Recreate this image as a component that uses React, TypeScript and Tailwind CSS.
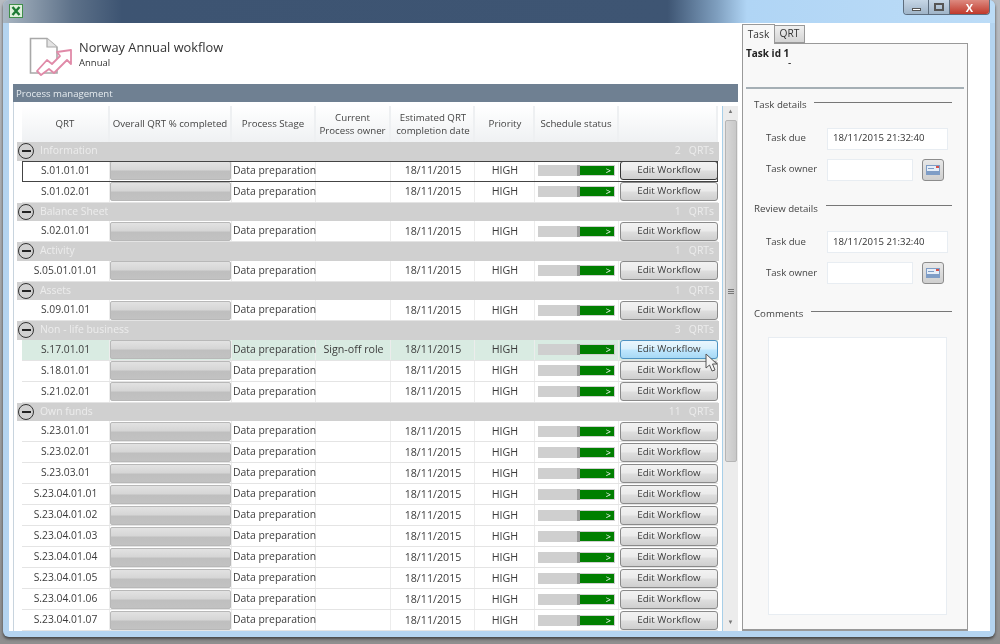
import React from "react";

const cols = "grid w-[696px] grid-cols-[88px_122px_84px_75px_84px_60px_84px_99px]";
const cell = "flex h-full items-center justify-center border-r border-[#ececec]";

function Progress() {
  return <div className="h-[19px] w-[121px] rounded-[2px] border border-[#b8b8b8] bg-[linear-gradient(180deg,#e2e2e2_0%,#d6d6d6_45%,#bfbfbf_55%,#c2c2c2_100%)]" />;
}

function Schedule() {
  return (
    <div className="ml-[3px] flex h-[11px] w-[77px] items-center bg-[#cfcfcf]">
      <div className="w-[39px]" />
      <div className="h-full w-[3px] bg-[#9c9c9c]" />
      <div className="mr-px flex h-[9px] flex-1 items-center justify-end bg-[#007f00] pr-[3px] text-[9px] leading-none text-white">&gt;</div>
    </div>
  );
}

function Row({ q, owner, hover, selected }: { q: string; owner?: string; hover?: boolean; selected?: boolean }) {
  return (
    <div className={`${cols} h-[21px] items-center border-b border-[#e4e4e4] text-center text-[10.7px] text-[#3c3c3c] ${hover ? "bg-[#d9ebe2]" : "bg-white"} ${selected ? "outline outline-1 -outline-offset-1 outline-[#444]" : ""}`}>
      <div className={`${cell} text-[10.3px]`}>{q}</div>
      <div className={cell}><Progress /></div>
      <div className={`${cell} justify-start whitespace-nowrap pl-[1px] text-[10.4px]`}>Data preparation</div>
      <div className={`${cell} pl-[1px]`}>{owner}</div>
      <div className={`${cell} pl-[1px]`}>18/11/2015</div>
      <div className={`${cell} pl-[1px]`}>HIGH</div>
      <div className={`${cell} justify-start`}><Schedule /></div>
      <button className={`ml-px h-[19px] w-[98px] rounded-[3px] border text-[9.8px] text-[#3c3c3c] ${selected ? "border-[#333]" : hover ? "border-[#4f93c2]" : "border-[#8a8a8a]"} ${hover ? "bg-[linear-gradient(180deg,#eaf6fd_0%,#d9f0fc_45%,#bee6fd_55%,#a7d9f5_100%)]" : "bg-[linear-gradient(180deg,#f2f2f2_0%,#ebebeb_45%,#dddddd_55%,#cfcfcf_100%)]"}`}>Edit Workflow</button>
    </div>
  );
}

function Group({ name, count }: { name: string; count: string }) {
  return (
    <div className="relative -ml-[5px] flex h-[18.5px] w-[702px] items-center justify-between bg-[#d0d0d0] pl-[23px] pr-[5px] text-[10.4px] text-[#ececec]">
      <span className="absolute left-[1px] top-[1px] flex h-[16px] w-[16px] items-center justify-center rounded-full border-[1.5px] border-[#333]">
        <span className="h-[2px] w-[9px] bg-[#222]" />
      </span>
      <span>{name}</span>
      <span className="whitespace-pre">{count}{"   "}QRTs</span>
    </div>
  );
}

function Head({ children, nudge }: { children?: React.ReactNode; nudge?: boolean }) {
  return <div className={`flex items-center justify-center border-r-2 border-[#eef0f2] text-center text-[9.7px] leading-[13.5px] text-[#444] ${nudge ? "pl-[2px]" : ""}`}>{children}</div>;
}

function Fieldset({ title, w }: { title: string; w: string }) {
  return (
    <div className="flex items-center pl-[11px] pr-[12px] text-[9.7px] text-[#444]">
      <span className={w}>{title}</span>
      <div className="-mt-[6px] h-px flex-1 bg-[#777]" />
    </div>
  );
}

function Details({ title }: { title: string }) {
  return (
    <div>
      <Fieldset title={title} w={title === "Task details" ? "w-[60px]" : "w-[72px]"} />
      <div className="mt-[15px] flex items-center pl-[23px] text-[9.6px] text-[#444]">
        <span className="w-[61px]">Task due</span>
        <div className="flex h-[22px] w-[121px] items-center border border-[#e8edf2] bg-white pl-[5px] text-[#333]">18/11/2015 21:32:40</div>
      </div>
      <div className="mt-[9px] flex items-center pl-[23px] text-[9.6px] text-[#444]">
        <span className="w-[61px]">Task owner</span>
        <div className="h-[22px] w-[86px] border border-[#e8edf2] bg-white" />
        <button className="ml-[9px] flex h-[22px] w-[22px] items-center justify-center rounded-[3px] border border-[#8c8c8c] bg-[linear-gradient(180deg,#e8e8e8,#cfcfcf)]">
          <svg width="14" height="10" viewBox="0 0 14 10">
            <rect x="0.5" y="0.5" width="13" height="9" fill="#e6eef8" stroke="#7f9dc6" />
            <rect x="1" y="6" width="12" height="3" fill="#7f9dc6" />
            <rect x="2" y="3" width="6" height="1" fill="#7f9dc6" />
            <rect x="10" y="1" width="3" height="2" fill="#d8504a" />
          </svg>
        </button>
      </div>
    </div>
  );
}

export default function App() {
  return (
    <div className="relative flex h-[644px] w-[1000px] flex-col overflow-hidden bg-[linear-gradient(180deg,#b8bcc2_0%,#8f8f8f_100%)] font-['Open_Sans','Noto_Sans',sans-serif] blur-[0.4px]">
      <div className="ml-[3px] flex h-[637px] w-[992px] flex-col rounded-[6px] bg-[#b4d4f0] shadow-[0_2px_3px_#444]">
        <div className="relative flex h-[23px] shrink-0 items-start rounded-t-[6px] bg-[linear-gradient(90deg,#a9b6c2_0%,#5d7189_7%,#3d5472_12%,#3e5573_67%,#7f9fbf_72%,#b0d5f5_75%,#bcdcf7_100%)] pl-[6px] pt-[4px]">
          <svg width="14" height="14" viewBox="0 0 14 14">
            <rect x="0.5" y="0.5" width="13" height="13" fill="#dff0dc" stroke="#3f8f4a" />
            <path d="M3.5 3 L10.5 11 M10.5 3 L3.5 11" stroke="#1d7a35" strokeWidth="2.4" />
          </svg>
          <div className="absolute right-[5px] top-0 flex h-[15px] overflow-hidden rounded-b-[4px] border border-t-0 border-[#5d6d7e]">
            <div className="flex w-[24px] items-end justify-center bg-[linear-gradient(180deg,#c6d6e6,#9fb4c8)] pb-[3px]">
              <div className="h-[3px] w-[9px] border border-[#555] bg-white" />
            </div>
            <div className="flex w-[22px] items-center justify-center border-x border-[#5d6d7e] bg-[linear-gradient(180deg,#c6d6e6,#9fb4c8)]">
              <div className="h-[8px] w-[10px] border-2 border-[#555]" />
            </div>
            <div className="flex w-[39px] items-center justify-center bg-[linear-gradient(180deg,#dd8a80,#c0392b)] text-[11px] font-bold leading-none text-white">X</div>
          </div>
        </div>
        <div className="ml-[6px] mr-[5px] flex h-[608px] bg-white">
          <div className="flex w-[729px] shrink-0 flex-col pl-[4px]">
            <div className="flex h-[61px] shrink-0 items-start pl-[16px]">
              <svg width="44" height="40" viewBox="0 0 44 40" className="mt-[14px]">
                <path d="M1.5 1.5 H18 L28 10 V36 H1.5 Z" fill="#fff" stroke="#a8a8a8" strokeWidth="1.6" />
                <path d="M18 1.5 V10 H28" fill="#e4e4e4" stroke="#a8a8a8" strokeWidth="1.2" />
                <path d="M8 34 L18 23 L23 27 L31 19 L28 15 L42 13 V27 L38 23 L25 36 L20 32 L12 38 Z" fill="#fff" stroke="#e08aa8" strokeWidth="1.8" strokeLinejoin="round" />
              </svg>
              <div className="ml-[6px] mt-[16px]">
                <div className="text-[12.8px] leading-[17px] text-[#333]">Norway Annual wokflow</div>
                <div className="text-[9.5px] leading-[13px] text-[#333]">Annual</div>
              </div>
            </div>
            <div className="flex h-[18px] shrink-0 items-end bg-[#6f8092] pb-[1px] pl-[3px] text-[9.6px] text-[#e6ebef]">Process management</div>
            <div className="flex min-h-0 flex-1 border-l border-[#c8d4de] pt-[4px]">
              <div className="h-full w-[709px] shrink-0 overflow-hidden border-r border-[#a8cfe8] bg-white pl-[8px]">
                <div className={`${cols} h-[36px] bg-[linear-gradient(180deg,#ffffff,#eff1f3)]`}>
                  <Head>QRT</Head>
                  <Head>Overall QRT % completed</Head>
                  <Head>Process Stage</Head>
                  <Head>Current<br />Process owner</Head>
                  <Head nudge>Estimated QRT<br />completion date</Head>
                  <Head nudge>Priority</Head>
                  <Head>Schedule status</Head>
                  <Head />
                </div>
                <Group name="Information" count="2" />
                <Row q="S.01.01.01" selected />
                <Row q="S.01.02.01" />
                <Group name="Balance Sheet" count="1" />
                <Row q="S.02.01.01" />
                <Group name="Activity" count="1" />
                <Row q="S.05.01.01.01" />
                <Group name="Assets" count="1" />
                <Row q="S.09.01.01" />
                <Group name="Non - life business" count="3" />
                <Row q="S.17.01.01" owner="Sign-off role" hover />
                <Row q="S.18.01.01" />
                <Row q="S.21.02.01" />
                <Group name="Own funds" count="11" />
                <Row q="S.23.01.01" />
                <Row q="S.23.02.01" />
                <Row q="S.23.03.01" />
                <Row q="S.23.04.01.01" />
                <Row q="S.23.04.01.02" />
                <Row q="S.23.04.01.03" />
                <Row q="S.23.04.01.04" />
                <Row q="S.23.04.01.05" />
                <Row q="S.23.04.01.06" />
                <Row q="S.23.04.01.07" />
              </div>
              <div className="flex h-full w-[15px] shrink-0 flex-col items-center bg-[#ececec] pb-[6px] pt-[2px] text-[6px] leading-none text-[#777]">
                <span className="h-[12px]">▲</span>
                <div className="flex h-[342px] w-[12px] flex-col items-center justify-center gap-[1px] rounded-[2px] border border-[#b5b5b5] bg-[linear-gradient(90deg,#d8d8d8,#c8c8c8)]">
                  <span className="h-px w-[6px] bg-[#777]" />
                  <span className="h-px w-[6px] bg-[#777]" />
                  <span className="h-px w-[6px] bg-[#777]" />
                </div>
                <span className="mt-auto">▼</span>
              </div>
            </div>
          </div>
          <div className="ml-[4px] flex w-[226px] shrink-0 flex-col">
            <div className="flex h-[20px] shrink-0 items-end text-[10.2px] text-[#333]">
              <div className="z-10 -mb-px flex h-[20px] w-[33px] items-center justify-center border border-b-0 border-[#999] bg-[#f8f8f8]">Task</div>
              <div className="flex h-[18px] w-[30px] items-center justify-center border border-l-0 border-[#999] bg-[linear-gradient(180deg,#f0f0f0,#d4d4d4)]">QRT</div>
            </div>
            <div className="min-h-0 flex-1 border border-b-2 border-[#999] bg-[#f8f8f8] px-[3px]">
              <div className="text-[10px] font-bold leading-[18px] text-[#222]">Task id 1</div>
              <div className="-mt-[2px] pl-[42px] text-[10px] leading-[4px]">-</div>
              <div className="mt-[23px] h-[2px] w-[218px] bg-[#a5afb5]" />
              <div className="-ml-[3px] mt-[9px]">
                <Details title="Task details" />
              </div>
              <div className="-ml-[3px] mt-[21px]">
                <Details title="Review details" />
              </div>
              <div className="-ml-[3px] mt-[23px]">
                <Fieldset title="Comments" w="w-[57px]" />
              </div>
              <div className="ml-[22px] mt-[15px] h-[278px] w-[179px] border border-[#e8edf2] bg-white" />
            </div>
          </div>
        </div>
      </div>
      <svg width="16" height="20" viewBox="0 0 16 20" className="absolute left-[705px] top-[353px]">
        <path d="M1 1 V15 L4.5 12 L7 18 L10 17 L7.5 11 H12 Z" fill="#f4f4f4" stroke="#555" strokeWidth="1" />
      </svg>
    </div>
  );
}
